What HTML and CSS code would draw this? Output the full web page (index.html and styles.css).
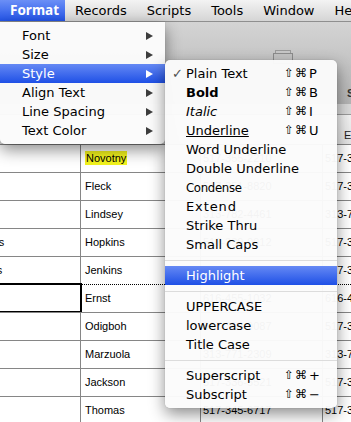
FILE: index.html
```html
<!DOCTYPE html>
<html>
    <head>
        <title>Format menu</title>
        <link rel="stylesheet" href="styles.css">
    </head>
    <body>
        <div class="menubar">
            <span class="mb-item active">Format</span>
            <span class="mb-item">Records</span>
            <span class="mb-item">Scripts</span>
            <span class="mb-item">Tools</span>
            <span class="mb-item">Window</span>
            <span class="mb-item">Help</span>
        </div>

        <div class="window">
            <div class="toolbar">
                <svg class="tb-icon" width="20" height="14" viewBox="0 0 20 14">
                    <rect x="2.5" y="0.5" width="15" height="10" fill="none" stroke="#9a9a9a"/>
                    <rect x="0.5" y="3.5" width="19" height="10" fill="#c4c4c4" stroke="#8c8c8c"/>
                </svg>
                <span class="tb-label">Sort</span>
            </div>
            <div class="strip"></div>
            <div class="colhead"><span>Emergency</span></div>
            <div class="rows">
                <div class="row">
                    <div class="cell c1">Karen</div>
                    <div class="cell c2"><span class="hl">Novotny</span></div>
                    <div class="cell c3">517-355-2210</div>
                    <div class="cell c4">517-332-4815</div>
                </div>
                <div class="row">
                    <div class="cell c1">Mark</div>
                    <div class="cell c2">Fleck</div>
                    <div class="cell c3">517-351-8820</div>
                    <div class="cell c4">517-337-1290</div>
                </div>
                <div class="row">
                    <div class="cell c1">Erin</div>
                    <div class="cell c2">Lindsey</div>
                    <div class="cell c3">313-782-4461</div>
                    <div class="cell c4">313-782-5521</div>
                </div>
                <div class="row">
                    <div class="cell c1">Nicholas</div>
                    <div class="cell c2">Hopkins</div>
                    <div class="cell c3">517-339-0912</div>
                    <div class="cell c4">517-339-8841</div>
                </div>
                <div class="row">
                    <div class="cell c1">Douglas</div>
                    <div class="cell c2">Jenkins</div>
                    <div class="cell c3">517-349-2276</div>
                    <div class="cell c4">517-349-6610</div>
                </div>
                <div class="row selected">
                    <div class="cell c1">Anna</div>
                    <div class="cell c2">Ernst</div>
                    <div class="cell c3">616-455-1032</div>
                    <div class="cell c4">616-455-7781</div>
                </div>
                <div class="row">
                    <div class="cell c1">Paul</div>
                    <div class="cell c2">Odigboh</div>
                    <div class="cell c3">517-353-9087</div>
                    <div class="cell c4">517-353-4420</div>
                </div>
                <div class="row">
                    <div class="cell c1">Lisa</div>
                    <div class="cell c2">Marzuola</div>
                    <div class="cell c3">313-771-2309</div>
                    <div class="cell c4">313-771-6654</div>
                </div>
                <div class="row">
                    <div class="cell c1">Jill</div>
                    <div class="cell c2">Jackson</div>
                    <div class="cell c3">517-336-5521</div>
                    <div class="cell c4">517-336-0098</div>
                </div>
                <div class="row">
                    <div class="cell c1">Amy</div>
                    <div class="cell c2">Thomas</div>
                    <div class="cell c3">517-345-6717</div>
                    <div class="cell c4">517-345-6718</div>
                </div>
            </div>
        </div>

        <!-- Format menu -->
        <div class="menu format-menu">
            <div class="mi">Font<span class="arrow"></span></div>
            <div class="mi">Size<span class="arrow"></span></div>
            <div class="mi on">Style<span class="arrow"></span></div>
            <div class="mi">Align Text<span class="arrow"></span></div>
            <div class="mi">Line Spacing<span class="arrow"></span></div>
            <div class="mi">Text Color<span class="arrow"></span></div>
        </div>

        <!-- Style submenu -->
        <div class="menu style-menu">
            <div class="mi"><span class="check">&#10003;</span><span class="label">Plain Text</span><span class="sc"><span class="mods">&#8679;&#8984;</span><span class="key">P</span></span></div>
            <div class="mi"><span class="label bold">Bold</span><span class="sc"><span class="mods">&#8679;&#8984;</span><span class="key">B</span></span></div>
            <div class="mi"><span class="label italic">Italic</span><span class="sc"><span class="mods">&#8679;&#8984;</span><span class="key">I</span></span></div>
            <div class="mi"><span class="label under">Underline</span><span class="sc"><span class="mods">&#8679;&#8984;</span><span class="key">U</span></span></div>
            <div class="mi"><span class="label">Word Underline</span></div>
            <div class="mi"><span class="label">Double Underline</span></div>
            <div class="mi"><span class="label condense">Condense</span></div>
            <div class="mi"><span class="label extend">Extend</span></div>
            <div class="mi"><span class="label">Strike Thru</span></div>
            <div class="mi"><span class="label">Small Caps</span></div>
            <div class="sep"></div>
            <div class="mi on"><span class="label">Highlight</span></div>
            <div class="sep"></div>
            <div class="mi"><span class="label">UPPERCASE</span></div>
            <div class="mi"><span class="label">lowercase</span></div>
            <div class="mi"><span class="label">Title Case</span></div>
            <div class="sep"></div>
            <div class="mi"><span class="label">Superscript</span><span class="sc"><span class="mods">&#8679;&#8984;</span><span class="key">+</span></span></div>
            <div class="mi"><span class="label">Subscript</span><span class="sc"><span class="mods">&#8679;&#8984;</span><span class="key">&#8722;</span></span></div>
        </div>
    </body>
</html>
```

FILE: styles.css
```css
body {
    margin: 0;
    width: 351px;
    height: 422px;
    overflow: hidden;
    position: relative;
    background-color: white;
    color: black;
    font-family: "Liberation Sans", Arial, sans-serif;
}

/* top menu bar */
.menubar {
    height: 22px;
    box-sizing: border-box;
    display: flex;
    background: linear-gradient(#f3f3f3, #d5d5d5);
    border-bottom: 1px solid #8f8f8f;
    font-family: "DejaVu Sans", sans-serif;
    font-size: 13px;
    white-space: nowrap;
}
.mb-item {
    flex: none;
    padding: 0 10px;
    line-height: 21px;
}
.mb-item.active {
    width: 65px;
    box-sizing: border-box;
    padding: 0 0 0 10px;
    background: linear-gradient(#6b8ff6, #2354e8);
    color: white;
    font-family: "Noto Sans", sans-serif;
    font-size: 13.5px;
    font-weight: bold;
}

/* window behind the menus */
.toolbar {
    height: 82px;
    box-sizing: border-box;
    display: flex;
    align-items: flex-start;
    padding: 28px 0 0 273px;
    background: linear-gradient(#d4d4d4, #b4b4b4);
}
.tb-icon {
    flex: none;
}
.tb-label {
    margin: 37px 0 0 54px;
    font-size: 11px;
    font-weight: bold;
    color: #333;
}
.strip {
    height: 10px;
    background-color: #d9d9d9;
    border-bottom: 1px solid #9b9b9b;
}
.colhead {
    height: 29px;
    box-sizing: border-box;
    padding: 14px 0 0 344px;
    background: linear-gradient(#f2f2f2, #e4e4e4);
    font-size: 11px;
    color: #222;
    white-space: nowrap;
}
.rows {
    margin-left: -50px;
    width: 493px;
}
.row {
    display: grid;
    grid-template-columns: 131px 120px 122px 120px;
    height: 28px;
}
.cell {
    border-top: 1px solid #868686;
    border-right: 1px solid #868686;
    line-height: 27px;
    font-size: 11px;
    white-space: nowrap;
    overflow: hidden;
    padding-left: 2px;
}
.c1 {
    padding-left: 12px;
}
.c2 {
    padding-left: 4px;
}
.hl {
    background-color: #f2f31e;
    padding: 1px 1px;
}
.selected .cell {
    border-top: 1px dotted #000;
}
.selected .c1 {
    outline: 2px solid #000;
    outline-offset: -1px;
}

/* menus */
.menu {
    position: absolute;
    padding: 4px 0;
    background-color: rgba(251, 251, 251, 0.97);
    font-family: "DejaVu Sans", sans-serif;
    font-size: 13px;
    box-shadow: 0 6px 16px rgba(0, 0, 0, 0.45), 0 0 1px rgba(0, 0, 0, 0.3);
    white-space: nowrap;
}
.format-menu {
    left: 0;
    top: 22px;
    width: 165px;
    border-radius: 0 0 5px 5px;
}
.style-menu {
    left: 165px;
    top: 60px;
    width: 172px;
    border-radius: 5px;
}
.mi {
    height: 19px;
    line-height: 19px;
    display: flex;
    align-items: center;
    padding: 0 12px 0 22px;
}
.style-menu .mi {
    padding: 0 14px 0 21px;
}
.mi.on {
    background: linear-gradient(#6589f4, #1f50e6);
    color: white;
}
.arrow {
    margin-left: auto;
    width: 0;
    height: 0;
    border-left: 7px solid #3d3d3d;
    border-top: 4px solid transparent;
    border-bottom: 4px solid transparent;
}
.mi.on .arrow {
    border-left-color: white;
}
.check {
    width: 14px;
    margin-left: -14px;
    color: #505050;
    font-size: 13px;
}
.sc {
    margin-left: auto;
    display: flex;
}
.mods {
    font-size: 12px;
    letter-spacing: 1px;
}
.key {
    width: 14px;
    margin-left: 1px;
}
.bold {
    font-weight: bold;
}
.italic {
    font-style: italic;
}
.under {
    text-decoration: underline;
}
.condense {
    font-family: "DejaVu Sans Condensed", "DejaVu Sans", sans-serif;
    letter-spacing: -0.3px;
}
.extend {
    letter-spacing: 0.9px;
}
.sep {
    height: 12px;
    display: flex;
    align-items: center;
}
.sep::after {
    content: "";
    flex: 1;
    height: 1px;
    background-color: #dcdcdc;
}
```
